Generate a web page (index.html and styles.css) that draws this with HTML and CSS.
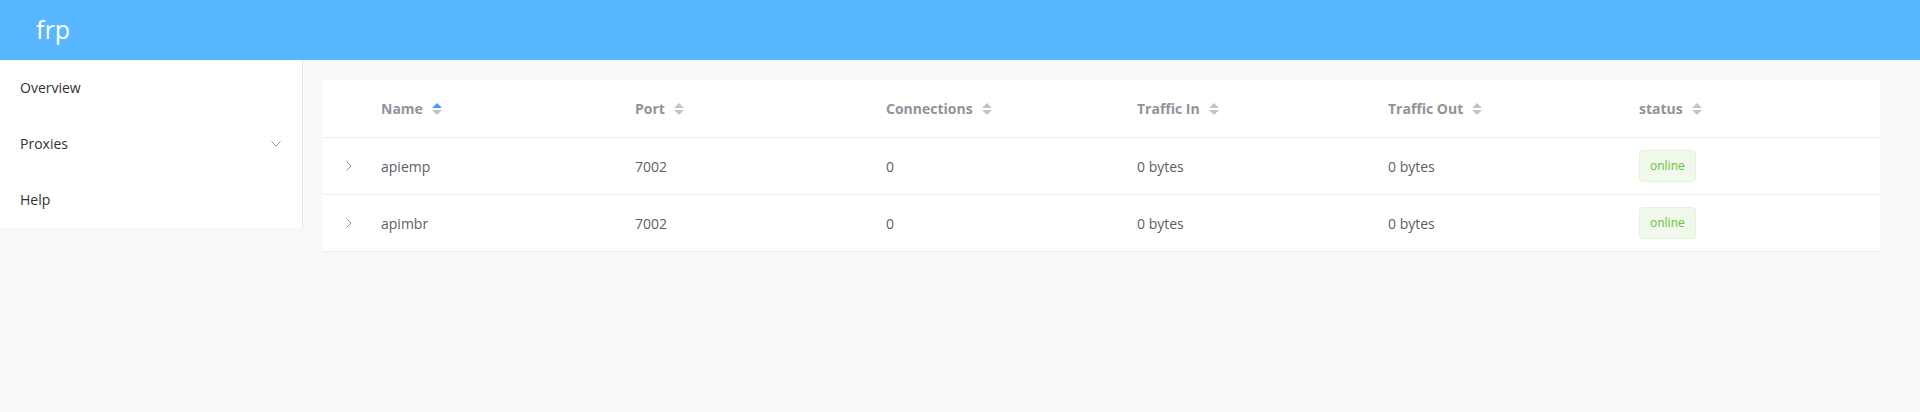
FILE: index.html
```html
<!DOCTYPE html>
<html>
<head>
<meta charset="utf-8">
<link rel="stylesheet" href="styles.css">
</head>
<body>
<header class="topbar">
  <span class="brand">frp</span>
</header>
<div class="layout">
  <nav class="sidebar">
    <div class="menu-item">Overview</div>
    <div class="menu-item submenu">
      <span>Proxies</span>
      <svg class="arrow-down" width="10" height="6" viewBox="0 0 10 6"><polyline points="0.5,0.5 5,5 9.5,0.5" fill="none" stroke="#909399" stroke-width="1"/></svg>
    </div>
    <div class="menu-item">Help</div>
  </nav>
  <main class="main">
    <div class="table">
      <div class="row head">
        <div class="cell"></div>
        <div class="cell"><span>Name</span><span class="caret asc"><i class="up"></i><i class="down"></i></span></div>
        <div class="cell"><span>Port</span><span class="caret"><i class="up"></i><i class="down"></i></span></div>
        <div class="cell"><span>Connections</span><span class="caret"><i class="up"></i><i class="down"></i></span></div>
        <div class="cell"><span>Traffic In</span><span class="caret"><i class="up"></i><i class="down"></i></span></div>
        <div class="cell"><span>Traffic Out</span><span class="caret"><i class="up"></i><i class="down"></i></span></div>
        <div class="cell"><span>status</span><span class="caret"><i class="up"></i><i class="down"></i></span></div>
      </div>
      <div class="row">
        <div class="cell expand"><svg width="6" height="10" viewBox="0 0 6 10"><polyline points="0.5,0.5 5,5 0.5,9.5" fill="none" stroke="#909399" stroke-width="1"/></svg></div>
        <div class="cell">apiemp</div>
        <div class="cell">7002</div>
        <div class="cell">0</div>
        <div class="cell">0 bytes</div>
        <div class="cell">0 bytes</div>
        <div class="cell"><span class="tag">online</span></div>
      </div>
      <div class="row">
        <div class="cell expand"><svg width="6" height="10" viewBox="0 0 6 10"><polyline points="0.5,0.5 5,5 0.5,9.5" fill="none" stroke="#909399" stroke-width="1"/></svg></div>
        <div class="cell">apimbr</div>
        <div class="cell">7002</div>
        <div class="cell">0</div>
        <div class="cell">0 bytes</div>
        <div class="cell">0 bytes</div>
        <div class="cell"><span class="tag">online</span></div>
      </div>
    </div>
  </main>
</div>
</body>
</html>
```

FILE: styles.css
```css
* { box-sizing: border-box; }
html, body {
  margin: 0;
  padding: 0;
  background: #f9f9f9;
  font-family: "Open Sans", "Noto Sans", sans-serif;
  font-size: 14px;
}
.topbar {
  height: 60px;
  background: #58b7ff;
  padding-left: 36px;
}
.brand {
  display: block;
  color: #fff;
  font-size: 25px;
  line-height: 58px;
}
.layout {
  display: flex;
  align-items: flex-start;
}
.sidebar {
  width: 303px;
  flex: none;
  background: #fff;
  border-right: 1px solid #e6e6e6;
}
.menu-item {
  height: 56px;
  line-height: 56px;
  padding: 0 21px 0 20px;
  color: #303133;
  display: flex;
  align-items: center;
  justify-content: space-between;
}
.arrow-down { display: block; }
.main {
  flex: 1;
  padding: 20px 40px 20px 20px;
}
.table {
  background: #fff;
}
.row {
  display: grid;
  grid-template-columns: 48px 254px repeat(5, 1fr);
  height: 57px;
  border-bottom: 1px solid #ebeef5;
  color: #5e6066;
}
.row.head {
  height: 58px;
  color: #909399;
  font-weight: bold;
}
.cell {
  display: flex;
  align-items: center;
  padding-left: 10px;
  white-space: nowrap;
}
.cell.expand {
  padding-left: 23px;
}
.cell.expand svg { display: block; }
.caret {
  display: inline-flex;
  flex-direction: column;
  justify-content: center;
  margin-left: 9px;
  gap: 2px;
  height: 14px;
}
.caret i {
  display: block;
  width: 0;
  height: 0;
  border-left: 5px solid transparent;
  border-right: 5px solid transparent;
}
.caret .up { border-bottom: 5px solid #c0c4cc; }
.caret .down { border-top: 5px solid #c0c4cc; }
.caret.asc .up { border-bottom-color: #409eff; }
.tag {
  display: inline-block;
  height: 32px;
  line-height: 30px;
  padding: 0 10px;
  font-size: 12px;
  color: #67c23a;
  background: #f0f9eb;
  border: 1px solid #e1f3d8;
  border-radius: 4px;
}
```
